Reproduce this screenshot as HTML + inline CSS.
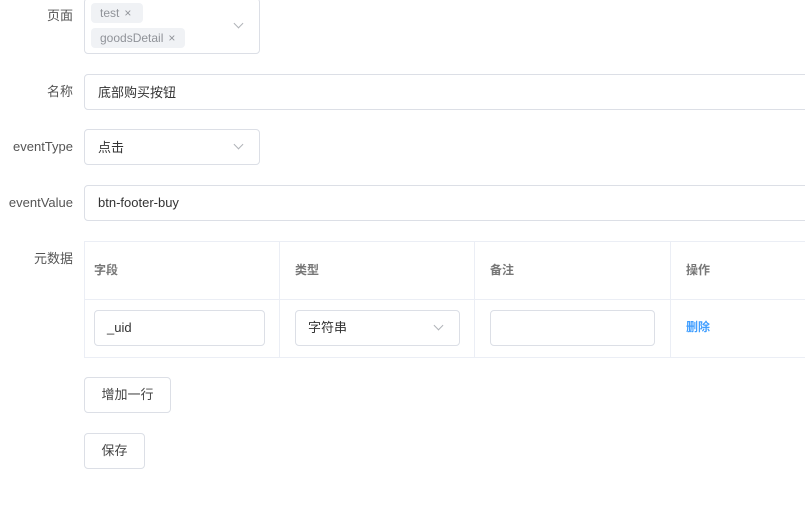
<!DOCTYPE html>
<html><head><meta charset="utf-8"><style>
*{box-sizing:border-box;margin:0;padding:0}
body{width:805px;height:526px;background:#fff;font-family:"Liberation Sans","Noto Sans CJK SC",sans-serif;font-size:13px;line-height:16px;color:#333;position:relative;overflow:hidden}
.a{position:absolute}
.lbl{position:absolute;right:732px;color:#555;font-size:13px;white-space:nowrap}
.box{position:absolute;border:1px solid #dcdfe6;border-radius:4px;background:#fff}
.txt{position:absolute;left:13px;color:#333;line-height:16px}
.tag{position:absolute;background:#f0f2f5;border-radius:4px;height:20px;color:#909399;font-size:12px;line-height:20px;padding-left:9px}
.tag i{font-style:normal;margin-left:5px}
.arr{position:absolute;width:7px;height:7px;border-right:1px solid #b0b3b8;border-bottom:1px solid #b0b3b8;transform:rotate(45deg)}
.th{position:absolute;top:262px;color:#777;font-size:12px;font-weight:bold}
.vl{position:absolute;top:241px;height:116px;width:1px;background:#ebeef5}
.btn{position:absolute;border:1px solid #dcdfe6;border-radius:4px;font-size:13px;text-align:center;color:#444}
</style></head><body>
<div class="lbl" style="top:8px">页面</div>
<div class="box" style="left:84px;top:-2px;width:176px;height:56px"></div>
<div class="tag" style="left:91px;top:3px;width:52px">test<i>×</i></div>
<div class="tag" style="left:91px;top:28px;width:94px">goodsDetail<i>×</i></div>
<div class="arr" style="left:235px;top:20px"></div>

<div class="lbl" style="top:84px">名称</div>
<div class="box" style="left:84px;top:74px;width:730px;height:36px"><span class="txt" style="top:10px">底部购买按钮</span></div>

<div class="lbl" style="top:139px">eventType</div>
<div class="box" style="left:84px;top:129px;width:176px;height:36px"><span class="txt" style="top:10px">点击</span></div>
<div class="arr" style="left:235px;top:141px"></div>

<div class="lbl" style="top:195px">eventValue</div>
<div class="box" style="left:84px;top:185px;width:730px;height:36px"><span class="txt" style="top:9px">btn-footer-buy</span></div>

<div class="lbl" style="top:251px">元数据</div>
<div class="a" style="left:84px;top:241px;width:730px;height:117px;border:1px solid #ebeef5"></div>
<div class="a" style="left:84px;top:299px;width:730px;height:1px;background:#ebeef5"></div>
<div class="vl" style="left:279px"></div><div class="vl" style="left:474px"></div><div class="vl" style="left:670px"></div>
<div class="th" style="left:94px">字段</div>
<div class="th" style="left:295px">类型</div>
<div class="th" style="left:490px">备注</div>
<div class="th" style="left:686px">操作</div>
<div class="box" style="left:94px;top:310px;width:171px;height:36px"><span class="txt" style="top:9px;left:12px">_uid</span></div>
<div class="box" style="left:295px;top:310px;width:165px;height:36px"><span class="txt" style="top:9px;left:12px">字符串</span></div>
<div class="arr" style="left:435px;top:322px"></div>
<div class="box" style="left:490px;top:310px;width:165px;height:36px"></div>
<div class="a" style="left:686px;top:319px;color:#409eff;font-size:12px;font-weight:bold">删除</div>

<div class="btn" style="left:84px;top:377px;width:87px;height:36px;line-height:34px">增加一行</div>
<div class="btn" style="left:84px;top:433px;width:61px;height:36px;line-height:34px">保存</div>
</body></html>
